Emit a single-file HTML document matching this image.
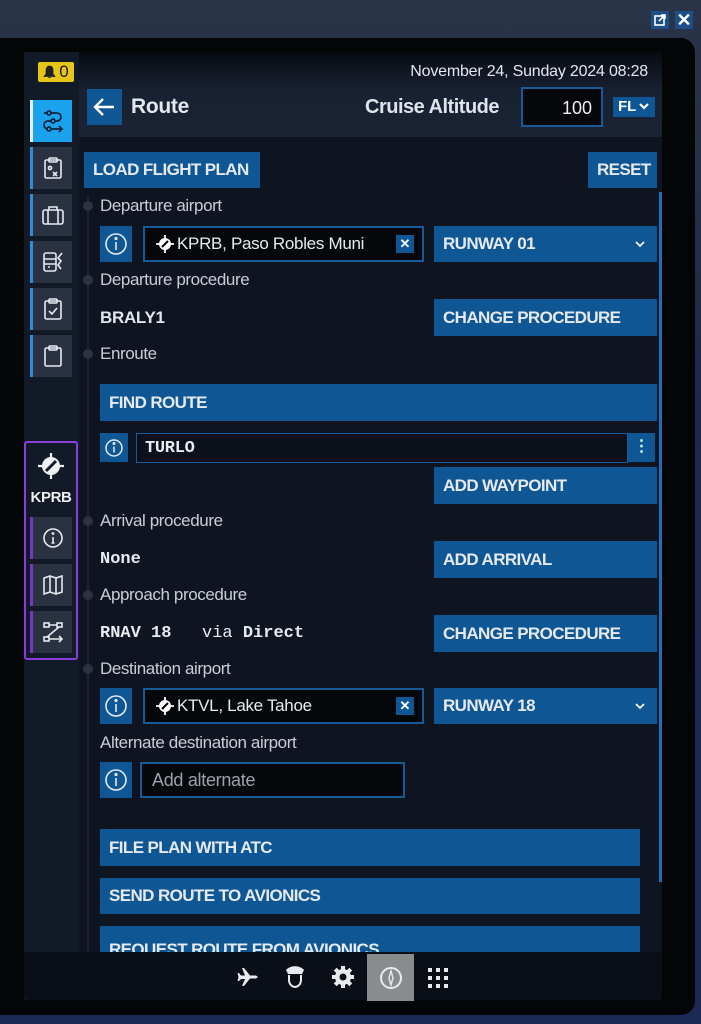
<!DOCTYPE html>
<html><head><meta charset="utf-8"><style>
*{box-sizing:border-box;margin:0;padding:0}
body{width:701px;height:1024px;overflow:hidden;position:relative;background:linear-gradient(180deg,#2a3448 0%,#1c2a4a 40%,#1a2a55 100%);font-family:"Liberation Sans",sans-serif;color:#e2e6ec}
.a{position:absolute}
.frame{left:0;top:38px;width:695px;height:977px;background:#040507;border-radius:0 14px 14px 0}
.inner{left:24px;top:52px;width:638px;height:948px;background:#0e1521;border-radius:4px}
.side{left:24px;top:52px;width:55px;height:948px;background:#121a27}
.hdr{left:79px;top:52px;width:583px;height:85px;background:linear-gradient(180deg,#070a10 0%,#182132 45%,#1a2334 100%)}
.sb{width:42px;height:42px;left:30px;background:#2a3140;border-left:3px solid #2a8fd8;display:flex;align-items:center;justify-content:center}
.btn{background:#0e5794;color:#e6eaf0;font-weight:bold;font-size:17px;letter-spacing:-0.6px;display:flex;align-items:center;padding-left:9px;white-space:nowrap}
.lbl{font-size:17px;letter-spacing:-0.4px;color:#c9ced6;left:100px}
.dot{width:10px;height:10px;border-radius:50%;background:#2a3240;left:83px}
.info{background:#0e5794;display:flex;align-items:center;justify-content:center}
.inp{background:#05070b;border:2px solid #165a98;color:#e8ecf0;font-size:17px;letter-spacing:-0.3px;display:flex;align-items:center}
.mono{font-family:"Liberation Mono",monospace;font-weight:bold;font-size:17px;color:#e8ecf0}
.x{width:18px;height:18px;background:#0e5794;color:#fff;font-size:13px;font-weight:bold;display:flex;align-items:center;justify-content:center}
.chev{position:absolute;right:12px;top:14px}
</style></head><body>
<div class="a" style="left:651px;top:11px;width:18px;height:18px;background:#1d4f86"><svg width="18" height="18"><rect x="4" y="5" width="9" height="9" fill="none" stroke="#fff" stroke-width="1.6"/><path d="M8 10 L14 4 M10 4h4v4" stroke="#fff" stroke-width="1.6" fill="none"/></svg></div>
<div class="a" style="left:675px;top:11px;width:18px;height:18px;background:#1d4f86;color:#fff;font-weight:bold;font-size:18px;line-height:18px;text-align:center">✕</div>
<div class="a frame"></div>
<div class="a inner"></div>
<div class="a side"></div>
<div class="a hdr"></div>
<div class="a" style="left:38px;top:62px;width:36px;height:20px;background:#e6c619;border-radius:2px;color:#1a1a1a;font-size:17px;display:flex;align-items:center;justify-content:center;gap:3px"><svg width="13" height="14"><path d="M6.5 1C3.5 1 3 3.5 3 6v3L1 11.5h11L10 9V6C10 3.5 9.5 1 6.5 1z M5 12.5h3" fill="#222" stroke="#222" stroke-width="0.8"/></svg>0</div>
<div class="a sb" style="top:100px;background:#1aa3ec;border-left-color:#e6eef8"><svg width="24" height="24" fill="none" stroke="#0b2540" stroke-width="1.8"><circle cx="8" cy="4" r="2"/><circle cx="12" cy="12" r="2"/><circle cx="8" cy="20" r="2"/><path d="M3 4h3M10 4h6a4 4 0 0 1 0 8h-2M10 12H7a4 4 0 0 0 0 8M10 20h11M18 17l3 3-3 3"/></svg></div>
<div class="a sb" style="top:147px"><svg width="22" height="24" fill="none" stroke="#e6eaf0" stroke-width="1.6"><rect x="3" y="4" width="16" height="18" rx="1.5"/><rect x="7" y="2" width="8" height="4" rx="1"/><circle cx="8" cy="12" r="1.6"/><path d="M11 16l4 4M15 16l-4 4"/></svg></div>
<div class="a sb" style="top:194px"><svg width="24" height="22" fill="none" stroke="#e6eaf0" stroke-width="1.6"><rect x="2" y="6" width="20" height="14" rx="2"/><path d="M8 6V3h8v3M7 6v14M17 6v14"/></svg></div>
<div class="a sb" style="top:241px"><svg width="24" height="24" fill="none" stroke="#e6eaf0" stroke-width="1.6"><rect x="3" y="3" width="12" height="18" rx="2"/><path d="M3 9h12M3 14h12M7 17h2M21 3l-4 5 3 3-3 4 3 4"/></svg></div>
<div class="a sb" style="top:288px"><svg width="22" height="24" fill="none" stroke="#e6eaf0" stroke-width="1.6"><rect x="3" y="4" width="16" height="18" rx="1.5"/><rect x="7" y="2" width="8" height="4" rx="1"/><path d="M7 14l3 3 5-6"/></svg></div>
<div class="a sb" style="top:335px"><svg width="22" height="24" fill="none" stroke="#e6eaf0" stroke-width="1.6"><rect x="3" y="4" width="16" height="18" rx="1.5"/><rect x="7" y="2" width="8" height="4" rx="1"/></svg></div>
<div class="a" style="left:24px;top:441px;width:54px;height:219px;border:2px solid #8a3cdc;border-radius:3px"></div>
<div class="a" style="left:36px;top:451px"><svg width="30" height="30"><circle cx="15" cy="15" r="9" fill="#eef0f4"/><path d="M15 2v6M15 22v6M2 15h6M22 15h6" stroke="#eef0f4" stroke-width="2.2"/><path d="M10 20L20 10" stroke="#121a27" stroke-width="3"/></svg></div>
<div class="a" style="left:24px;top:489px;width:54px;text-align:center;font-weight:bold;font-size:15px;letter-spacing:-0.4px;color:#eef0f4">KPRB</div>
<div class="a sb" style="top:517px;border-left-color:#7a35c8"><svg width="24" height="24" fill="none" stroke="#e6eaf0" stroke-width="1.6"><circle cx="12" cy="12" r="9"/><path d="M12 11v6M10.5 17h3"/><circle cx="12" cy="7.5" r=".6" fill="#e6eaf0"/></svg></div>
<div class="a sb" style="top:564px;border-left-color:#7a35c8"><svg width="24" height="24" fill="none" stroke="#e6eaf0" stroke-width="1.6"><path d="M3 5l6-2 6 2 6-2v16l-6 2-6-2-6 2z M9 3v16M15 5v16"/></svg></div>
<div class="a sb" style="top:611px;border-left-color:#7a35c8"><svg width="24" height="24" fill="none" stroke="#e6eaf0" stroke-width="1.6"><rect x="3" y="3" width="5" height="4"/><rect x="16" y="3" width="5" height="4"/><rect x="3" y="17" width="5" height="4"/><path d="M8 5h8M18 7L6 17M8 19h12M18 16l3 3-3 3"/></svg></div>

<div class="a" style="left:87px;top:89px;width:35px;height:36px;background:#0e5794"><svg width="35" height="36" fill="none" stroke="#fff" stroke-width="2.4"><path d="M27 18H9M16 10l-8 8 8 8"/></svg></div>
<div class="a" style="left:131px;top:95px;font-size:21px;font-weight:bold;letter-spacing:-0.3px;color:#e4e8ee">Route</div>
<div class="a" style="right:53px;top:63px;font-size:16px;letter-spacing:-0.2px;color:#e4e8ee">November 24, Sunday 2024 08:28</div>
<div class="a" style="left:365px;top:96px;font-size:20px;font-weight:bold;letter-spacing:-0.5px;color:#dfe3ea">Cruise Altitude</div>
<div class="a" style="left:521px;top:87px;width:82px;height:40px;background:#05070b;border:2px solid #165a98;color:#eee;font-size:18px;text-align:right;padding:9px 9px 0 0">100</div>
<div class="a" style="left:613px;top:97px;width:42px;height:20px;background:#0e5794;color:#fff;font-weight:bold;font-size:15px;padding-left:5px;line-height:20px">FL<svg width="12" height="10" style="margin-left:2px"><path d="M2 3l4 4 4-4" stroke="#fff" stroke-width="2.2" fill="none"/></svg></div>

<div class="a btn" style="left:84px;top:152px;width:176px;height:36px">LOAD FLIGHT PLAN</div>
<div class="a btn" style="left:588px;top:152px;width:69px;height:36px">RESET</div>
<div class="a" style="left:87px;top:195px;width:2px;height:760px;background:#1d2533"></div>
<div class="a" style="left:659px;top:192px;width:3px;height:690px;background:#1e6fb8"></div>

<div class="a dot" style="top:201px"></div><div class="a lbl" style="top:196px">Departure airport</div>
<div class="a info" style="left:100px;top:226px;width:32px;height:36px"><svg width="24" height="24" fill="none" stroke="#e6eaf0" stroke-width="1.6"><circle cx="12" cy="12" r="10"/><path d="M12 10v8"/><circle cx="12" cy="6.5" r=".8" fill="#e6eaf0"/></svg></div>
<div class="a inp" style="left:143px;top:226px;width:281px;height:36px;padding-left:10px"><svg width="20" height="20" style="margin-right:2px"><circle cx="10" cy="10" r="6" fill="#fff"/><path d="M10 1v4M10 15v4M1 10h4M15 10h4" stroke="#fff" stroke-width="1.8"/><path d="M7 13l6-6" stroke="#000" stroke-width="2"/></svg>KPRB, Paso Robles Muni</div>
<div class="a x" style="left:396px;top:235px">✕</div>
<div class="a btn" style="left:434px;top:226px;width:223px;height:36px">RUNWAY 01<svg class="chev" width="10" height="8"><path d="M1 2l4 4 4-4" stroke="#fff" stroke-width="1.6" fill="none"/></svg></div>

<div class="a dot" style="top:275px"></div><div class="a lbl" style="top:270px">Departure procedure</div>
<div class="a" style="left:100px;top:308px;font-weight:bold;font-size:17px;letter-spacing:-0.3px">BRALY1</div>
<div class="a btn" style="left:434px;top:299px;width:223px;height:37px">CHANGE PROCEDURE</div>

<div class="a dot" style="top:349px"></div><div class="a lbl" style="top:344px">Enroute</div>
<div class="a btn" style="left:100px;top:384px;width:557px;height:37px">FIND ROUTE</div>
<div class="a info" style="left:100px;top:433px;width:28px;height:29px"><svg width="20" height="20" fill="none" stroke="#e6eaf0" stroke-width="1.5"><circle cx="10" cy="10" r="8"/><path d="M10 8.5v6"/><circle cx="10" cy="5.5" r=".7" fill="#e6eaf0"/></svg></div>
<div class="a inp mono" style="left:136px;top:433px;width:492px;height:30px;border-width:1px;background:#0b111b;padding-left:8px;font-size:17px">TURLO</div>
<div class="a" style="left:628px;top:433px;width:27px;height:29px;background:#0e5794;color:#cfe;text-align:center;font-size:16px;line-height:28px;font-weight:bold">⋮</div>
<div class="a btn" style="left:434px;top:467px;width:223px;height:37px">ADD WAYPOINT</div>

<div class="a dot" style="top:516px"></div><div class="a lbl" style="top:511px">Arrival procedure</div>
<div class="a mono" style="left:100px;top:550px">None</div>
<div class="a btn" style="left:434px;top:541px;width:223px;height:37px">ADD ARRIVAL</div>

<div class="a dot" style="top:590px"></div><div class="a lbl" style="top:585px">Approach procedure</div>
<div class="a mono" style="left:100px;top:624px;white-space:pre">RNAV 18   <span style="font-weight:normal">via</span> Direct</div>
<div class="a btn" style="left:434px;top:615px;width:223px;height:37px">CHANGE PROCEDURE</div>

<div class="a dot" style="top:664px"></div><div class="a lbl" style="top:659px">Destination airport</div>
<div class="a info" style="left:100px;top:688px;width:32px;height:36px"><svg width="24" height="24" fill="none" stroke="#e6eaf0" stroke-width="1.6"><circle cx="12" cy="12" r="10"/><path d="M12 10v8"/><circle cx="12" cy="6.5" r=".8" fill="#e6eaf0"/></svg></div>
<div class="a inp" style="left:143px;top:688px;width:281px;height:36px;padding-left:10px"><svg width="20" height="20" style="margin-right:2px"><circle cx="10" cy="10" r="6" fill="#fff"/><path d="M10 1v4M10 15v4M1 10h4M15 10h4" stroke="#fff" stroke-width="1.8"/><path d="M7 13l6-6" stroke="#000" stroke-width="2"/></svg>KTVL, Lake Tahoe</div>
<div class="a x" style="left:396px;top:697px">✕</div>
<div class="a btn" style="left:434px;top:688px;width:223px;height:36px">RUNWAY 18<svg class="chev" width="10" height="8"><path d="M1 2l4 4 4-4" stroke="#fff" stroke-width="1.6" fill="none"/></svg></div>

<div class="a lbl" style="top:733px">Alternate destination airport</div>
<div class="a info" style="left:100px;top:762px;width:32px;height:36px"><svg width="24" height="24" fill="none" stroke="#e6eaf0" stroke-width="1.6"><circle cx="12" cy="12" r="10"/><path d="M12 10v8"/><circle cx="12" cy="6.5" r=".8" fill="#e6eaf0"/></svg></div>
<div class="a inp" style="left:140px;top:762px;width:265px;height:36px;padding-left:10px;color:#9aa2ae;font-size:18px">Add alternate</div>

<div class="a btn" style="left:100px;top:829px;width:540px;height:37px">FILE PLAN WITH ATC</div>
<div class="a btn" style="left:100px;top:878px;width:540px;height:36px">SEND ROUTE TO AVIONICS</div>
<div class="a" style="left:100px;top:926px;width:540px;height:26px;overflow:hidden"><div class="btn" style="height:37px;padding-top:10px">REQUEST ROUTE FROM AVIONICS</div></div>

<div class="a" style="left:24px;top:952px;width:638px;height:48px;background:#0a0e16;border-radius:0 0 4px 4px"></div>
<div class="a" style="left:236px;top:966px"><svg width="24" height="22"><path d="M2 11h20l-2-1.5H14L8 2H6l3 7.5H5L3 7H1.5l1 4-1 4H3l2-2h4L6 20h2l6-7.5h6L22 11" fill="#e8eaee"/></svg></div>
<div class="a" style="left:284px;top:964px"><svg width="22" height="26"><path d="M2 6C6 1 16 1 20 6L18 10H4z" fill="#e8eaee"/><path d="M5 11v5c0 4 3 7 6 7s6-3 6-7v-5" fill="none" stroke="#e8eaee" stroke-width="2"/></svg></div>
<div class="a" style="left:331px;top:965px"><svg width="24" height="24"><g fill="#e8eaee"><circle cx="12" cy="12" r="8"/><rect x="10" y="1" width="4" height="22"/><rect x="1" y="10" width="22" height="4"/><rect x="10" y="1" width="4" height="22" transform="rotate(45 12 12)"/><rect x="10" y="1" width="4" height="22" transform="rotate(-45 12 12)"/></g><circle cx="12" cy="12" r="3.5" fill="#0a0e16"/></svg></div>
<div class="a" style="left:367px;top:954px;width:47px;height:47px;background:#8a8b8d;display:flex;align-items:center;justify-content:center"><svg width="26" height="26" fill="none" stroke="#e8eaee" stroke-width="2"><circle cx="13" cy="13" r="10"/><path d="M13 6l2 7-2 7-2-7z" stroke-width="1.4"/></svg></div>
<div class="a" style="left:427px;top:967px"><svg width="22" height="22" fill="#e8eaee"><rect x="1" y="1" width="4" height="4"/><rect x="9" y="1" width="4" height="4"/><rect x="17" y="1" width="4" height="4"/><rect x="1" y="9" width="4" height="4"/><rect x="9" y="9" width="4" height="4"/><rect x="17" y="9" width="4" height="4"/><rect x="1" y="17" width="4" height="4"/><rect x="9" y="17" width="4" height="4"/><rect x="17" y="17" width="4" height="4"/></svg></div>
</body></html>
